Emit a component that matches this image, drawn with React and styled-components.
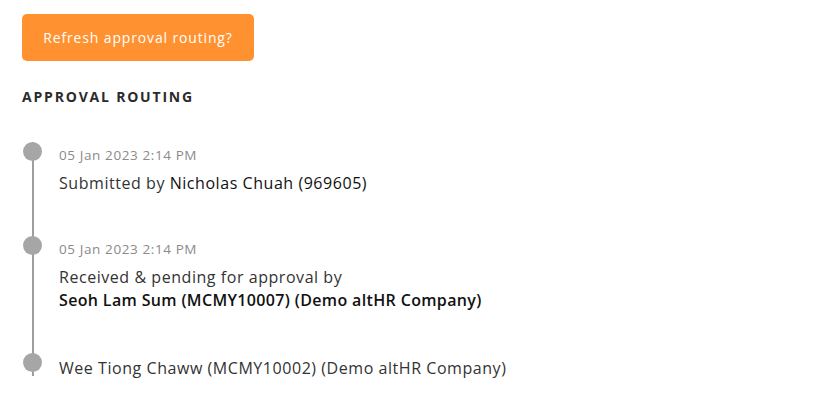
import React from "react";
import styled, { createGlobalStyle } from "styled-components";

const GlobalStyle = createGlobalStyle`
  body {
    margin: 0;
    background: #ffffff;
    font-family: "Open Sans", "Lato", sans-serif;
  }
`;

const steps = [
  {
    date: "05 Jan 2023 2:14 PM",
    lines: [
      { text: "Submitted by ", name: "Nicholas Chuah (969605)" },
    ],
  },
  {
    date: "05 Jan 2023 2:14 PM",
    lines: [
      { text: "Received & pending for approval by" },
      { name: "Seoh Lam Sum (MCMY10007) (Demo altHR Company)", bold: true },
    ],
  },
  {
    lines: [{ text: "Wee Tiong Chaww (MCMY10002) (Demo altHR Company)" }],
  },
];

const App = () => {
  return (
    <Page>
      <GlobalStyle />
      <RefreshButton>Refresh approval routing?</RefreshButton>
      <SectionTitle>Approval Routing</SectionTitle>
      <Timeline>
        {steps.map((step, i) => (
          <Step key={i} last={i === steps.length - 1}>
            {step.date && <StepDate>{step.date}</StepDate>}
            {step.lines.map((line, j) => (
              <StepLine key={j}>
                {line.text}
                {line.name && <Name bold={line.bold}>{line.name}</Name>}
              </StepLine>
            ))}
          </Step>
        ))}
      </Timeline>
    </Page>
  );
};

export default App;

const Page = styled.div`
  padding: 14px 22px;
  display: flex;
  flex-direction: column;
  align-items: flex-start;
`;

const RefreshButton = styled.button`
  width: 232px;
  height: 47px;
  border: none;
  border-radius: 5px;
  background-color: #ff9130;
  color: #ffffff;
  font-family: "Open Sans", "Lato", sans-serif;
  font-size: 14px;
  letter-spacing: 0.85px;
  cursor: pointer;
`;

const SectionTitle = styled.h3`
  margin: 27px 0 0;
  font-size: 14px;
  font-weight: 700;
  letter-spacing: 1.8px;
  text-transform: uppercase;
  color: #2b2b2b;
  line-height: 18px;
`;

const Timeline = styled.div`
  margin-top: 36px;
  display: flex;
  flex-direction: column;
  align-self: stretch;
`;

const Step = styled.div`
  position: relative;
  padding: 4px 0 ${(p) => (p.last ? "0" : "41px")} 37px;

  &::before {
    content: "";
    position: absolute;
    left: 10px;
    top: 0;
    bottom: ${(p) => (p.last ? "4px" : "0")};
    width: 2px;
    background: #9e9e9e;
  }

  &::after {
    content: "";
    position: absolute;
    left: 1px;
    top: 0;
    width: 19px;
    height: 19px;
    border-radius: 50%;
    background: #a6a6a6;
  }
`;

const StepDate = styled.div`
  font-size: 13.5px;
  line-height: 18px;
  letter-spacing: 0.6px;
  color: #8a8a8a;
  margin-bottom: 8px;
`;

const StepLine = styled.div`
  font-size: 16px;
  line-height: 23px;
  letter-spacing: 0.55px;
  color: #333333;
`;

const Name = styled.span`
  color: #111111;
  font-weight: ${(p) => (p.bold ? 600 : 500)};
  letter-spacing: ${(p) => (p.bold ? "0.35px" : "0.55px")};
`;
